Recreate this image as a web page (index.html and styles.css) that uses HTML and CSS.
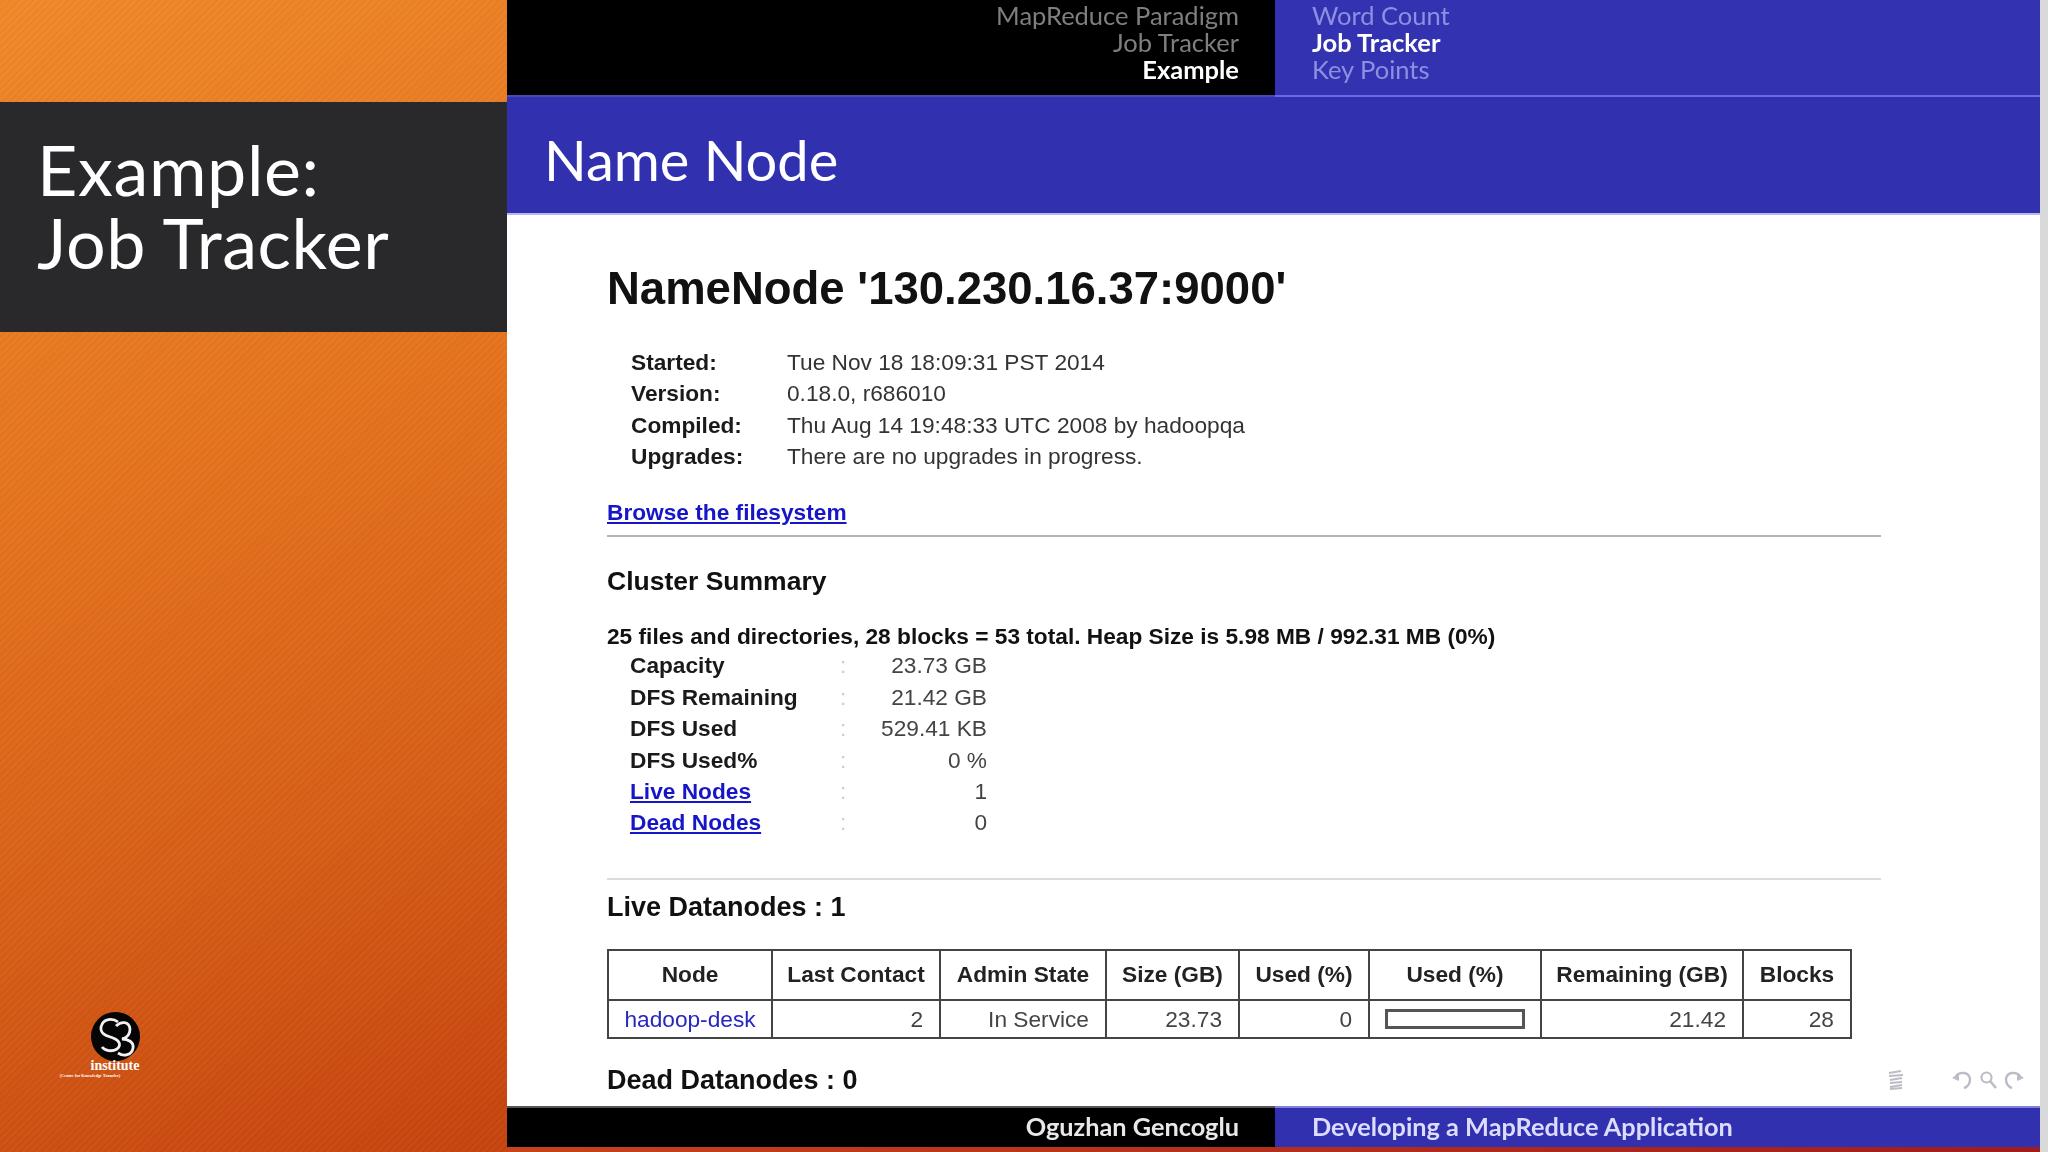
FILE: index.html
```html
<!DOCTYPE html>
<html lang="en">
<head>
<meta charset="utf-8">
<title>Example: Job Tracker</title>
<link rel="stylesheet" href="styles.css">
</head>
<body>
<aside class="side">
  <h1 class="side-title">Example:<br>Job Tracker</h1>
  <div class="logo">
    <svg class="logo-mark" width="49" height="49" viewBox="0 0 49 49" role="img" aria-label="SB monogram">
      <circle cx="24.5" cy="24.5" r="24.5" fill="#050505"/>
      <path d="M27 10 C22 6 12 6 10 15 C9 23 17 24 22 26 C28 28 31 33 26 37 C21 40 14 39 11 35" fill="none" stroke="#f2f2f2" stroke-width="2.8"/>
      <path d="M25 14 C30 9 38 9 39 17 C39 23 35 26 31 27 C37 27 43 30 42 36 C41 43 33 45 27 41" fill="none" stroke="#f2f2f2" stroke-width="2.8"/>
    </svg>
    <div class="logo-name">institute</div>
    <div class="logo-sub">(Centre for Knowledge Transfer)</div>
  </div>
</aside>
<main class="slide">
  <nav class="topnav">
    <div class="nav-left">
      <span>MapReduce Paradigm</span>
      <span>Job Tracker</span>
      <span class="on">Example</span>
    </div>
    <div class="nav-right">
      <span>Word Count</span>
      <span class="on">Job Tracker</span>
      <span>Key Points</span>
    </div>
  </nav>
  <header class="frame-title">Name Node</header>
  <section class="page">
    <h2 class="nn">NameNode '130.230.16.37:9000'</h2>
    <div class="info">
      <b>Started:</b><span>Tue Nov 18 18:09:31 PST 2014</span>
      <b>Version:</b><span>0.18.0, r686010</span>
      <b>Compiled:</b><span>Thu Aug 14 19:48:33 UTC 2008 by hadoopqa</span>
      <b>Upgrades:</b><span>There are no upgrades in progress.</span>
    </div>
    <a class="browse" href="#">Browse the filesystem</a>
    <hr class="rule">
    <h3 class="sec sec-cluster">Cluster Summary</h3>
    <p class="totals">25 files and directories, 28 blocks = 53 total. Heap Size is 5.98 MB / 992.31 MB (0%)</p>
    <div class="summary">
      <b>Capacity</b><i>:</i><span>23.73 GB</span>
      <b>DFS Remaining</b><i>:</i><span>21.42 GB</span>
      <b>DFS Used</b><i>:</i><span>529.41 KB</span>
      <b>DFS Used%</b><i>:</i><span>0 %</span>
      <a href="#">Live Nodes</a><i>:</i><span>1</span>
      <a href="#">Dead Nodes</a><i>:</i><span>0</span>
    </div>
    <hr class="rule rule-light">
    <h3 class="sec sec-live">Live Datanodes : 1</h3>
    <table class="nodes">
      <thead>
        <tr>
          <th class="c1">Node</th><th class="c2">Last Contact</th><th class="c3">Admin State</th><th class="c4">Size (GB)</th><th class="c5">Used (%)</th><th class="c6">Used (%)</th><th class="c7">Remaining (GB)</th><th class="c8">Blocks</th>
        </tr>
      </thead>
      <tbody>
        <tr>
          <td class="node"><a href="#">hadoop-desk</a></td><td>2</td><td>In Service</td><td>23.73</td><td>0</td><td class="barcell"><div class="bar"></div></td><td>21.42</td><td>28</td>
        </tr>
      </tbody>
    </table>
    <div class="last-row">
      <h3 class="sec sec-dead">Dead Datanodes : 0</h3>
      <div class="beamer-icons">
        <svg class="ic-list" width="18" height="20" viewBox="0 0 18 20" aria-hidden="true"><path d="M2 3 L14 1 M2 6 L16 5 M3 10 L15 8 M3 13 L15 12 M3 17 L15 15 M3 19 L15 18" fill="none" stroke="#bcbcc6" stroke-width="2"/></svg>
        <svg width="22" height="20" viewBox="0 0 22 20" aria-hidden="true"><path d="M5 6 C9 1 18 2 19 9 C19 14 16 17 13 18" fill="none" stroke="#bcbcc6" stroke-width="2.4"/><path d="M1 8 L8 3 L8 11 Z" fill="#bcbcc6"/></svg>
        <svg width="18" height="20" viewBox="0 0 18 20" aria-hidden="true"><circle cx="7.5" cy="7.5" r="5" fill="none" stroke="#bcbcc6" stroke-width="2.2"/><path d="M11 11 L17 18" stroke="#bcbcc6" stroke-width="2.6"/></svg>
        <svg width="22" height="20" viewBox="0 0 22 20" aria-hidden="true"><path d="M17 6 C13 1 4 2 3 9 C3 14 6 17 9 18" fill="none" stroke="#bcbcc6" stroke-width="2.4"/><path d="M21 8 L14 3 L14 11 Z" fill="#bcbcc6"/></svg>
      </div>
    </div>
  </section>
  <footer class="foot">
    <div class="foot-left"><span class="soft">Oguzhan Gencoglu</span></div>
    <div class="foot-right"><span class="soft">Developing a MapReduce Application</span></div>
  </footer>
  <div class="strip"></div>
</main>
</body>
</html>
```
FILE: styles.css
```css
* { box-sizing: border-box; }
html, body { margin: 0; height: 1152px; }
body {
  width: 2048px;
  overflow: hidden;
  display: flex;
  background: #d9d9d9;
}
.side {
  width: 507px;
  height: 1152px;
  flex: none;
  padding-top: 102px;
  display: flex;
  flex-direction: column;
  background:
    repeating-linear-gradient(135deg, rgba(255,255,255,.022) 0 2px, rgba(0,0,0,.018) 2px 5px),
    linear-gradient(160deg, #f0892a 0%, #e5731e 40%, #d85f17 70%, #c6440e 100%);
}
.side-title {
  margin: 0;
  height: 230px;
  padding: 31px 0 0 37px;
  background: #29282b;
  color: #fff;
  font: 400 70px/73px "Lato", sans-serif;
  letter-spacing: .6px;
}
.logo {
  margin: 680px 0 0 85px;
  width: 60px;
  display: flex;
  flex-direction: column;
  align-items: center;
  color: #fff;
  font-family: "Liberation Serif", serif;
  font-weight: 700;
}
.logo-mark { flex: none; display: block; }
.logo-name { font-size: 14px; line-height: 13px; margin-top: -2px; white-space: nowrap; }
.logo-sub { font-size: 4.3px; line-height: 8px; white-space: nowrap; margin-right: 50px; }

.slide {
  width: 1533px;
  height: 1152px;
  flex: none;
  display: flex;
  flex-direction: column;
  background: #fff;
}
.topnav {
  height: 97px;
  flex: none;
  display: flex;
  font: 400 25.5px/27px "Lato", sans-serif;
}
.nav-left, .nav-right {
  display: flex;
  flex-direction: column;
  padding-top: 2px;
}
.nav-left {
  width: 768px;
  background: #000;
  color: #7f7f7f;
  align-items: flex-end;
  padding-right: 36px;
  border-bottom: 2px solid #4a48b8;
}
.nav-right {
  flex: 1;
  background: #3333b2;
  color: #8f8fe2;
  padding-left: 37px;
  border-bottom: 2px solid #6a6ae6;
}
.nav-left span, .nav-right span, .frame-title, .soft { filter: blur(.5px); }
.topnav .on { color: #fff; font-weight: 700; }
.frame-title {
  height: 118px;
  flex: none;
  background: #3131b0;
  border-bottom: 2px solid #b8b8ee;
  color: #fff;
  padding: 28px 0 0 37px;
  font: 400 56px/70px "Lato", sans-serif;
}
.page {
  flex: 1;
  min-height: 0;
  padding: 49px 0 0 100px;
  color: #111;
  font-family: "Liberation Sans", Arial, sans-serif;
  font-size: 22.7px;
  line-height: 31.4px;
  filter: blur(.45px);
}
.nn {
  margin: 0;
  font-size: 45.5px;
  line-height: 50px;
  font-weight: 700;
}
.info {
  margin: 33px 0 0 24px;
  display: grid;
  grid-template-columns: 156px 1fr;
  color: #333;
}
.info b, .summary b { color: #1a1a1a; }
.browse {
  display: block;
  margin-top: 24px;
  color: #1616c8;
  font-weight: 700;
  width: max-content;
}
.summary a { color: #1616c8; font-weight: 700; width: max-content; }
.rule {
  margin: 7px 0 0;
  width: 1274px;
  border: 0;
  height: 2px;
  background: #b4b4b4;
}
.rule-light { margin-top: 39px; background: #dcdcdc; }
.sec { margin: 0; font-size: 27px; line-height: 32px; font-weight: 700; color: #111; }
.sec-cluster { margin-top: 28px; font-size: 26.5px; }
.totals { margin: 24px 0 0; font-weight: 700; color: #111; white-space: nowrap; }
.summary {
  margin: -2px 0 0 23px;
  display: grid;
  grid-template-columns: 210px 20px 127px;
  width: max-content;
  color: #444;
}
.summary i { color: #ccc; font-style: normal; }
.summary span { text-align: right; }
.sec-live { margin-top: 11px; }
.nodes {
  margin-top: 26px;
  border-collapse: collapse;
  table-layout: fixed;
  width: 1243px;
  border: 2px solid #444;
  line-height: 24px;
}
.nodes th, .nodes td { border: 2px solid #444; padding: 0 16px; }
.nodes th { height: 50px; font-weight: 700; text-align: center; color: #222; white-space: nowrap; padding: 0 2px 2px; }
.nodes td { height: 38px; text-align: right; color: #444; }
.nodes td.node { text-align: center; padding: 0 2px; }
.node a { color: #2626c0; text-decoration: none; }
.c1 { width: 164px; }
.c2 { width: 168px; }
.c3 { width: 166px; }
.c4 { width: 133px; }
.c5 { width: 130px; }
.c6 { width: 172px; }
.c7 { width: 202px; }
.c8 { width: 108px; }
.nodes td.barcell { padding: 0 15px; }
.bar { height: 20px; border: 3px solid #555; background: #fff; }
.last-row {
  display: flex;
  justify-content: space-between;
  align-items: center;
  margin-top: 25px;
  height: 32px;
  padding-right: 15px;
}
.beamer-icons { display: flex; align-items: center; gap: 6px; }
.ic-list { margin-right: 40px; }
.foot {
  height: 41px;
  flex: none;
  display: flex;
  font: 700 25.3px/36px "Lato", sans-serif;
}
.foot-left {
  width: 768px;
  background: #000;
  color: #e8e8e8;
  text-align: right;
  padding-right: 36px;
  border-top: 2px solid #555;
}
.foot-right {
  flex: 1;
  background: #3131b0;
  color: #dcdcff;
  padding-left: 37px;
  border-top: 2px solid #8080e0;
}
.soft { display: inline-block; }
.strip {
  height: 5px;
  flex: none;
  background: linear-gradient(90deg, #c8421a, #a01c1c);
}
```
